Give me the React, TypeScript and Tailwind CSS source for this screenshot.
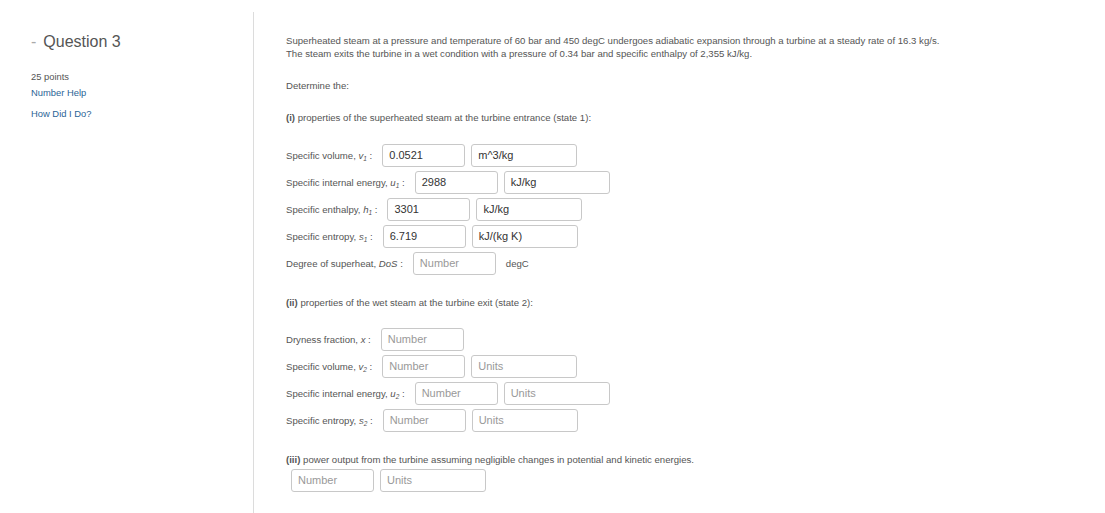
import type { ReactNode } from 'react';

function Field({ value, placeholder, width = 'w-[83px]' }: { value?: string; placeholder?: string; width?: string }) {
  return (
    <div
      className={`${width} h-[23px] shrink-0 rounded-[3px] border border-[#c8c8c8] bg-white pl-[6px] flex items-center text-[11px] ${
        value ? 'text-[#333]' : 'text-[#999]'
      }`}
    >
      {value ?? placeholder}
    </div>
  );
}

function Sym({ v, n }: { v: string; n: string }) {
  return (
    <>
      <i>{v}</i>
      <sub className="text-[6.5px] italic">{n}</sub>
    </>
  );
}

function Row({
  label,
  value,
  unit,
  unitText,
  single
}: {
  label: ReactNode;
  value?: string;
  unit?: string;
  unitText?: string;
  single?: boolean;
}) {
  return (
    <div className="flex items-center h-[23px]">
      <span className="mr-[10px] whitespace-nowrap">{label}</span>
      <Field value={value} placeholder="Number" />
      {unitText ? (
        <span className="ml-[10px] text-[#555]">{unitText}</span>
      ) : single ? null : (
        <div className="ml-[6px]">
          <Field value={unit} placeholder="Units" width="w-[106px]" />
        </div>
      )}
    </div>
  );
}

export default function App() {
  return (
    <div className="flex min-h-[513px] bg-white font-['Liberation_Sans',Arial,sans-serif] text-[9.6px] text-[#555]">
      <div className="w-[253px] shrink-0 pl-[31px] pt-[33px]">
        <div className="flex items-center text-[16px] leading-[18px]">
          <span className="text-[#aaa] mr-[7px]">-</span>
          <span className="text-[#555]">Question 3</span>
        </div>
        <div className="mt-[19px] leading-[13px] text-[9.4px]">25 points</div>
        <div className="mt-[3px] leading-[13px] text-[9.4px] text-[#2a6496]">Number Help</div>
        <div className="mt-[8px] leading-[13px] text-[9.4px] text-[#2a6496]">How Did I Do?</div>
      </div>

      <div className="mt-[12px] border-l border-[#dcdcdc] pl-[32px] pt-[22px] leading-[13px]">
        <p>
          Superheated steam at a pressure and temperature of 60 bar and 450 degC undergoes adiabatic expansion through a
          turbine at a steady rate of 16.3 kg/s.
          <br />
          The steam exits the turbine in a wet condition with a pressure of 0.34 bar and specific enthalpy of 2,355 kJ/kg.
        </p>
        <p className="mt-[19px]">Determine the:</p>
        <p className="mt-[19px]">
          <b>(i)</b> properties of the superheated steam at the turbine entrance (state 1):
        </p>

        <div className="mt-[20px] flex flex-col gap-[4px]">
          <Row label={<>Specific volume, <Sym v="v" n="1" /> :</>} value="0.0521" unit="m^3/kg" />
          <Row label={<>Specific internal energy, <Sym v="u" n="1" /> :</>} value="2988" unit="kJ/kg" />
          <Row label={<>Specific enthalpy, <Sym v="h" n="1" /> :</>} value="3301" unit="kJ/kg" />
          <Row label={<>Specific entropy, <Sym v="s" n="1" /> :</>} value="6.719" unit="kJ/(kg K)" />
          <Row label={<>Degree of superheat, <i>DoS</i> :</>} unitText="degC" />
        </div>

        <p className="mt-[21px]">
          <b>(ii)</b> properties of the wet steam at the turbine exit (state 2):
        </p>

        <div className="mt-[19px] flex flex-col gap-[4px]">
          <Row label={<>Dryness fraction, <i>x</i> :</>} single />
          <Row label={<>Specific volume, <Sym v="v" n="2" /> :</>} />
          <Row label={<>Specific internal energy, <Sym v="u" n="2" /> :</>} />
          <Row label={<>Specific entropy, <Sym v="s" n="2" /> :</>} />
        </div>

        <p className="mt-[21px]">
          <b>(iii)</b> power output from the turbine assuming negligible changes in potential and kinetic energies.
        </p>
        <div className="mt-[3px] ml-[5px] flex items-center">
          <Field placeholder="Number" />
          <div className="ml-[6px]">
            <Field placeholder="Units" width="w-[106px]" />
          </div>
        </div>
      </div>
    </div>
  );
}
